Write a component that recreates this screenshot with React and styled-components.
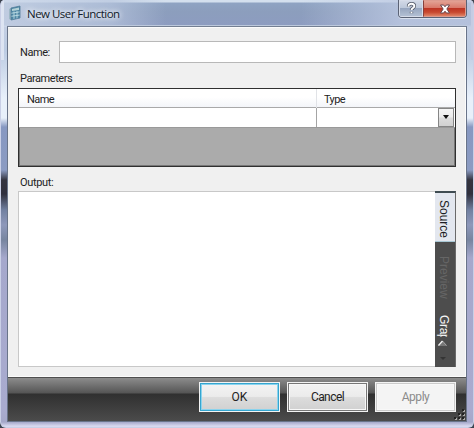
import React from "react";
import styled, { createGlobalStyle } from "styled-components";

const Global = createGlobalStyle`
  * { box-sizing: border-box; }
  body { margin: 0; overflow: hidden; background: #3c434f; }
`;

const Window = styled.div`
  width: 474px;
  height: 428px;
  display: flex;
  flex-direction: column;
  padding: 0 6px 6px;
  border: solid #c9cfe6;
  border-width: 0 1px 1px;
  border-radius: 5px 5px 6px 6px;
  overflow: hidden;
  font-family: Roboto, "Liberation Sans", sans-serif;
  font-size: 11px;
  color: #222;
  background:
    linear-gradient(90deg, #dde4f2 0 3px, transparent 3px 470px, #c5cce3 470px) 0 0 / 100% 60px no-repeat,
    linear-gradient(90deg, rgba(205,216,234,.8) 0, rgba(184,198,222,.7) 110px, transparent 165px, transparent 300px, rgba(190,202,227,.8) 400px) 0 0 / 100% 27px no-repeat,
    linear-gradient(#d4e0ee 0 2px, #8fa3c2 3px, #8c9ebd 12px, #8d9cc0 25px, transparent 26px) 0 0 / 100% 27px no-repeat,
    linear-gradient(#c3cee3 0 27px, #bccbe2 50px, #e8f0fa 98px, #e8f0fa 118px, #8798c1 127px, #8b9bc2 170px, #34343f 180px, #30303d 194px, #7180a0 210px, #8e98ba 225px, #77859f 240px, #a5a8cc 258px, #a9abcf 410px, #a4a7c9 422px, #d7d8ef 426px);
`;

const TitleBar = styled.header`
  height: 26px;
  flex: none;
  display: flex;
  align-items: flex-start;
`;

const TitleIcon = styled.svg`
  width: 13px;
  height: 16px;
  margin: 5px 0 0 1px;
  flex: none;
`;

const Title = styled.h1`
  flex: 1;
  margin: 6px 0 0 6px;
  font: 11.5px/16px "Open Sans", "Noto Sans", sans-serif;
  letter-spacing: -0.53px;
  color: #111a28;
  text-shadow: 0 0 5px #fff, 0 0 6px #eef3fa;
`;

const Caption = styled.div`
  display: flex;
  width: 69px;
  height: 18px;
  border: solid #5b6376;
  border-width: 0 1px 1px;
  border-radius: 0 0 4px 4px;
  overflow: hidden;
  box-shadow: 0 1px 0 #d9e0ee;
`;

const CaptionButton = styled.button`
  width: ${(p) => (p.$close ? "43px" : "24px")};
  height: 17px;
  padding: 0;
  display: grid;
  place-items: center;
  border: solid ${(p) => (p.$close ? "#dc9b8f" : "#d6dce9")};
  border-width: 1px;
  border-left-color: ${(p) => (p.$close ? "#87403c" : "#d6dce9")};
  background: ${(p) =>
    p.$close
      ? "linear-gradient(#e3a294 0, #d9796a 45%, #bd3524 50%, #c84930 75%, #df8265)"
      : "linear-gradient(#d1d8e6 0, #bdc8da 45%, #97a6bf 50%, #b2bfd3)"};
  svg { display: block; }
`;

const Client = styled.main`
  flex: 1;
  display: flex;
  flex-direction: column;
  border: 1px solid #697489;
  border-top-color: #747f92;
  background: #f0f0f0;
  box-shadow: 0 -1px 0 #bdc9dd;
`;

const Content = styled.div`
  height: 350px;
  flex: none;
  display: flex;
  flex-direction: column;
  padding: 13px 9px 9px 10px;
  border: solid #fbfbfb;
  border-width: 1px 1px 1px 0;
`;

const NameRow = styled.div`
  display: flex;
  align-items: center;
  height: 22px;
`;

const Label = styled.label`
  width: ${(p) => (p.$inline ? "41px" : "auto")};
  height: 14px;
  flex: none;
  padding-left: 2px;
  line-height: 14px;
  letter-spacing: ${(p) => p.$track || "-0.45px"};
  margin-top: ${(p) => p.$top || "0"};
  padding-top: ${(p) => (p.$inline ? "1px" : "0")};
`;

const Input = styled.input`
  flex: 1;
  min-width: 0;
  height: 22px;
  border: 1px solid #b8b8b8;
  background: #fff;
  outline: none;
`;

const Table = styled.section`
  height: 79px;
  margin-top: 2px;
  flex: none;
  border: 1px solid #303030;
  box-shadow: inset 0 0 0 1px #777;
  background: #ababab;
`;

const Row = styled.div`
  display: grid;
  grid-template-columns: 298px 1fr;
  height: ${(p) => (p.$head ? "19px" : "20px")};
  border-bottom: 1px solid ${(p) => (p.$head ? "#a9a9a9" : "#999")};
  background: ${(p) => (p.$head ? "linear-gradient(#fff 45%, #f3f5f9)" : "#fff")};
`;

const Cell = styled.div`
  display: flex;
  justify-content: ${(p) => (p.$select ? "flex-end" : "flex-start")};
  line-height: 21px;
  letter-spacing: -0.6px;
  padding-left: ${(p) => (p.$first ? "8px" : "7px")};
  padding-right: ${(p) => (p.$select ? "1px" : "0")};
  border-right: ${(p) => (p.$first ? "1px solid " + (p.$head ? "#e1e3e7" : "#a4a4a4") : "0")};
`;

const DropButton = styled.button`
  width: 16px;
  height: 19px;
  padding: 0;
  display: grid;
  place-items: center;
  border: 1px solid #858585;
  background: linear-gradient(#f5f5f5, #ececec 48%, #dcdcdc 52%, #d1d1d1);
`;

const Output = styled.section`
  flex: 1;
  display: flex;
  margin-top: 1px;
  border: 1px solid #c8c8c8;
  border-right: 0;
  background: #fff;
`;

const Editor = styled.div`
  flex: 1;
`;

const Tabs = styled.nav`
  width: 21px;
  margin: -1px 0;
  display: flex;
  flex-direction: column;
  background: #4d4d4d;
  border-top: 2px solid #3f4c52;
  border-right: 1px solid #6a6a6a;
`;

const Tab = styled.div`
  height: ${(p) => p.$h};
  flex: none;
  overflow: hidden;
  writing-mode: vertical-rl;
  padding-top: ${(p) => p.$pad};
  line-height: 22px;
  font-family: "Liberation Sans", sans-serif;
  font-size: 12px;
  letter-spacing: ${(p) => p.$track || "0"};
  color: ${(p) => (p.$active ? "#1d1d24" : p.$dim ? "#666" : "#f6f6f6")};
  background: ${(p) => (p.$active ? "#e3e7ef" : "transparent")};
  border-bottom: ${(p) => (p.$active ? "1px solid #a9c8d5" : "0")};
`;

const TabScroll = styled.svg`
  display: block;
  width: 20px;
  height: 27px;
`;

const Footer = styled.footer`
  flex: 1;
  display: flex;
  gap: 7px;
  justify-content: flex-end;
  align-items: flex-start;
  padding-top: 4px;
  border-top: 1px solid #4e4e4e;
  background: linear-gradient(#8c8c8c 0, #555 15px, #303030 16px, #4b4b4b 43px);
`;

const Button = styled.button`
  width: 81px;
  height: 30px;
  padding: 0 0 1px;
  border: 1px solid #f3f3f3;
  background: ${(p) => (p.disabled ? "#f4f4f4" : "linear-gradient(#f4f4f4, #ebebeb 48%, #dcdcdc 52%, #d0d0d0)")};
  box-shadow: inset 0 0 0 1px ${(p) => (p.disabled ? "#cacaca" : p.$primary ? "#35a5cf" : "#777")},
    inset 0 0 0 2px ${(p) => (p.$primary ? "#8bd3ed" : "#f8f8f8")};
  color: ${(p) => (p.disabled ? "#8b8b8b" : "#222")};
  font: 12px Roboto, "Liberation Sans", sans-serif;
  letter-spacing: ${(p) => p.$track || "0"};
`;

const Grip = styled.svg`
  width: 12px;
  height: 12px;
  margin: 27px 0 0 -9px;
  flex: none;
`;

const gripDots = [[8, 0], [4, 4], [8, 4], [0, 8], [4, 8], [8, 8]];

export default function App() {
  return (
    <>
      <Global />
      <Window>
        <TitleBar>
          <TitleIcon viewBox="0 0 13 16">
            <path d="M3 3 12 1V13L3 15Z" fill="#4f87a5" />
            <path d="M3 3 1 4V14L3 15Z" fill="#9eb8c6" />
            <path d="M4 4 11 2.5V5L4 6Z" fill="#b3d1d6" />
            <path d="M3 8.3 12 6.8M3 11.3 12 10M6 6.5V14M9 6V14" stroke="#bcdbe3" strokeWidth=".9" />
            <path d="M3 3 12 1V13L3 15Z" fill="none" stroke="#517c98" strokeWidth=".8" />
          </TitleIcon>
          <Title>New User Function</Title>
          <Caption>
            <CaptionButton aria-label="Help">
              <svg width="11" height="13" viewBox="0 0 11 13" fill="none">
                <path d="M2.6 4.5V3.8C2.6 1 8.4 1 8.4 4.1 8.4 6 5.5 6 5.5 8M5.5 9.7V11.2" stroke="#505665" strokeWidth="3.4" />
                <path d="M2.6 4.5V3.8C2.6 1 8.4 1 8.4 4.1 8.4 6 5.5 6 5.5 8M5.5 9.7V11.2" stroke="#fff" strokeWidth="1.9" />
              </svg>
            </CaptionButton>
            <CaptionButton $close aria-label="Close">
              <svg width="12" height="12" viewBox="0 0 12 12">
                <path d="M1.5 2H4.6L6 3.8 7.4 2h3.1L7.8 6l2.7 4H7.4L6 8.2 4.6 10H1.5L4.2 6Z" fill="#fff" stroke="#684850" strokeWidth="1" />
              </svg>
            </CaptionButton>
          </Caption>
        </TitleBar>
        <Client>
          <Content>
            <NameRow>
              <Label $inline htmlFor="name">Name:</Label>
              <Input id="name" />
            </NameRow>
            <Label as="div" $top="9px">Parameters</Label>
            <Table>
              <Row $head>
                <Cell $first $head>Name</Cell>
                <Cell>Type</Cell>
              </Row>
              <Row>
                <Cell $first />
                <Cell $select>
                  <DropButton aria-label="Choose type">
                    <svg width="8" height="5"><path d="M1 0H7L4 4Z" fill="#111" /></svg>
                  </DropButton>
                </Cell>
              </Row>
            </Table>
            <Label as="div" $top="9px" $track="-0.35px">Output:</Label>
            <Output>
              <Editor />
              <Tabs>
                <Tab $active $h="49px" $pad="7px">Source</Tab>
                <Tab $dim $h="72px" $pad="14px">Preview</Tab>
                <Tab $h="23px" $pad="1px" $track="-0.3px">Graph</Tab>
                <TabScroll viewBox="0 0 20 27" fill="none">
                  <path d="M4 9 7.5 4 12 9Z" fill="#777" />
                  <path d="M3.5 8.5 7.5 4 11.5 8.5" stroke="#a8a8a8" />
                  <path d="M3.5 8.5 7.5 4" stroke="#f0f0f0" strokeWidth="1.3" />
                  <path d="M5 20H11L8 23Z" fill="#343434" />
                </TabScroll>
              </Tabs>
            </Output>
          </Content>
          <Footer>
            <Button $primary>OK</Button>
            <Button $track="-0.55px">Cancel</Button>
            <Button disabled $track="-0.45px">Apply</Button>
            <Grip viewBox="0 0 12 12">
              {gripDots.map(([x, y]) => (
                <g key={`${x}-${y}`}>
                  <rect x={x + 1} y={y + 1} width="2" height="2" fill="#aaa" />
                  <rect x={x} y={y} width="2" height="2" fill="#222" />
                </g>
              ))}
            </Grip>
          </Footer>
        </Client>
      </Window>
    </>
  );
}
